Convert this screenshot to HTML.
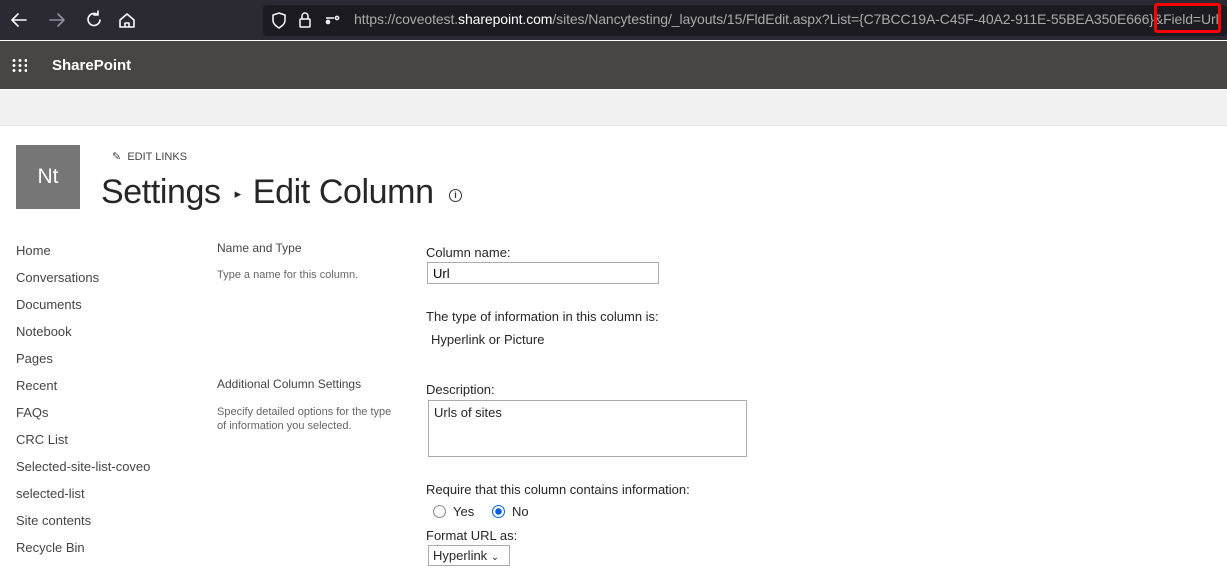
<!DOCTYPE html><html><head><style>
body{margin:0;width:1227px;height:572px;overflow:hidden;background:#fff;font-family:"Segoe UI","Liberation Sans",sans-serif;position:relative}
.a{position:absolute;white-space:nowrap}
.nav{font-size:13px;color:#444}
.lbl{font-size:13px;color:#262626}
.sm{font-size:11px;color:#666}
</style></head><body>
<div class="a" style="left:0;top:0;width:1227px;height:40px;background:#2b2a33"></div>
<div class="a" style="left:263px;top:5px;width:964px;height:31px;background:#1c1b22;border-radius:4px"></div>
<svg class="a" style="left:0;top:0" width="260" height="40" fill="none" stroke-width="1.6" stroke-linecap="round" stroke-linejoin="round">
<path d="M26 20H12M18 14l-6 6 6 6" stroke="#fbfbfe"/>
<path d="M50 20h14M58 14l6 6-6 6" stroke="#8f8f9d"/>
<path d="M98 15a6 6 0 1 0 2 5M98 11v4h-4" stroke="#fbfbfe"/>
<path d="M120 20l7-6 7 6v7h-14z M125 27v-4h4v4" stroke="#fbfbfe"/>
</svg>
<svg class="a" style="left:268px;top:8px" width="80" height="25" fill="none" stroke="#fbfbfe" stroke-width="1.5">
<path d="M11 5l6 2v5c0 4-3 6-6 8-3-2-6-4-6-8V7z"/>
<rect x="32" y="11" width="10" height="8" rx="1"/><path d="M34 11V8a3 3 0 0 1 6 0v3"/>
<path d="M58 10h8M58 14h4" /><circle cx="69" cy="10" r="1.6"/><circle cx="60" cy="14" r="1.6"/>
</svg>
<div class="a" style="left:354px;top:11px;font-size:14px;color:#aaa;letter-spacing:-0.1px">https://coveotest.<span style="color:#fff">sharepoint.com</span>/sites/Nancytesting/_layouts/15/FldEdit.aspx?List={C7BCC19A-C45F-40A2-911E-55BEA350E666}&amp;Field=Url</div>
<div class="a" style="left:1154px;top:3px;width:67px;height:30px;border:3px solid #f00;border-radius:3px;box-sizing:border-box"></div>
<div class="a" style="left:0;top:41px;width:1227px;height:48px;background:#484644"></div>
<div class="a" style="left:11px;top:58px;width:16px;height:14px;background:radial-gradient(circle,#fff 1.3px,transparent 1.6px) 0 0/6px 5px"></div>
<div class="a" style="left:52px;top:57px;font-size:15px;font-weight:bold;color:#fff">SharePoint</div>
<div class="a" style="left:0;top:90px;width:1227px;height:35px;background:#f0f0f0;border-bottom:1px solid #e6e6e6"></div>
<div class="a" style="left:16px;top:145px;width:64px;height:64px;background:#767676;color:#fff;font-size:21px;text-align:center;line-height:64px">Nt</div>
<div class="a" style="left:112px;top:150px;font-size:11px;color:#444">✎&nbsp; EDIT LINKS</div>
<div class="a" style="left:101px;top:173px;font-size:34px;font-weight:300;color:#262626;letter-spacing:-0.4px;font-family:'Segoe UI Light','Liberation Sans',sans-serif">Settings<span style="font-size:13px;vertical-align:middle;margin:0 12px 0 14px">▸</span>Edit Column</div>
<div class="a" style="left:449px;top:189px;width:11px;height:11px;border:1.5px solid #333;border-radius:50%;font-size:9px;text-align:center;line-height:11px;font-weight:bold;color:#333">i</div>
<div class="a nav" style="left:16px;top:237px;line-height:27px">Home<br>Conversations<br>Documents<br>Notebook<br>Pages<br>Recent<br>FAQs<br>CRC List<br>Selected-site-list-coveo<br>selected-list<br>Site contents<br>Recycle Bin</div>
<div class="a" style="left:217px;top:241px;font-size:12px;color:#444">Name and Type</div>
<div class="a sm" style="left:217px;top:269px">Type a name for this column.</div>
<div class="a" style="left:217px;top:377px;font-size:12px;color:#444">Additional Column Settings</div>
<div class="a sm" style="left:217px;top:405px;line-height:14px">Specify detailed options for the type<br>of information you selected.</div>
<div class="a lbl" style="left:426px;top:245px">Column name:</div>
<div class="a" style="left:427px;top:262px;width:232px;height:22px;border:1px solid #ababab;box-sizing:border-box;font-size:13px;padding:3px 5px">Url</div>
<div class="a lbl" style="left:426px;top:309px">The type of information in this column is:</div>
<div class="a lbl" style="left:431px;top:332px">Hyperlink or Picture</div>
<div class="a lbl" style="left:426px;top:382px">Description:</div>
<div class="a" style="left:428px;top:400px;width:319px;height:57px;border:1px solid #ababab;box-sizing:border-box;font-size:13px;padding:4px 5px;color:#262626">Urls of sites</div>
<div class="a lbl" style="left:426px;top:482px">Require that this column contains information:</div>
<div class="a" style="left:433px;top:505px;width:11px;height:11px;border:1.5px solid #888;border-radius:50%"></div>
<div class="a lbl" style="left:453px;top:504px">Yes</div>
<div class="a" style="left:492px;top:505px;width:11px;height:11px;border:1.5px solid #0060df;border-radius:50%;background:radial-gradient(circle,#0060df 3px,#fff 3.5px)"></div>
<div class="a lbl" style="left:512px;top:504px">No</div>
<div class="a lbl" style="left:426px;top:528px">Format URL as:</div>
<div class="a" style="left:428px;top:545px;width:82px;height:21px;border:1px solid #ababab;box-sizing:border-box;font-size:13px;padding:2px 4px;color:#262626">Hyperlink <span style="font-size:10px">⌄</span></div>
</body></html>
